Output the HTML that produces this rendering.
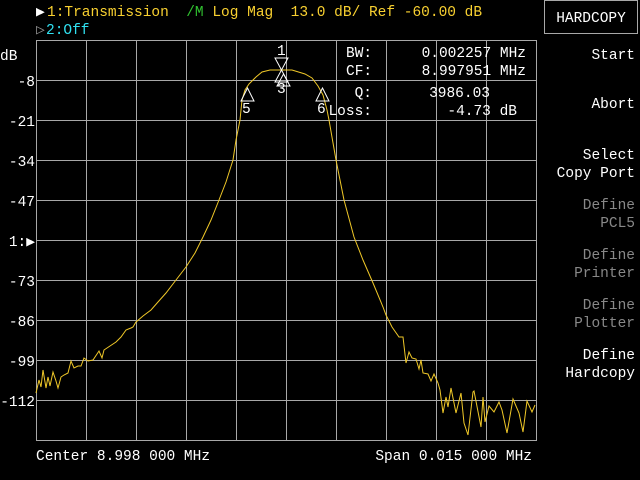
<!DOCTYPE html>
<html><head><meta charset="utf-8"><style>
html,body{margin:0;padding:0;background:#000;width:640px;height:480px;overflow:hidden}
svg{display:block}
text{font-family:"Liberation Mono",monospace;font-size:14.5px}
</style></head><body>
<svg width="640" height="480" viewBox="0 0 640 480" xmlns="http://www.w3.org/2000/svg">
<rect width="640" height="480" fill="#000"/>
<g stroke="#a8a8a8" stroke-width="1" fill="none" shape-rendering="crispEdges">
<rect x="36.5" y="40.5" width="500" height="400"/>
<path d="M86.5 40V440M136.5 40V440M186.5 40V440M236.5 40V440M286.5 40V440M336.5 40V440M386.5 40V440M436.5 40V440M486.5 40V440"/>
<path d="M36 80.5H536M36 120.5H536M36 160.5H536M36 200.5H536M36 240.5H536M36 280.5H536M36 320.5H536M36 360.5H536M36 400.5H536"/>
<rect x="544.5" y="0.5" width="93" height="33"/>
</g>
<polyline fill="none" stroke="#f0c828" stroke-width="1" points="36,393 39,380 41,387 43,370 46,388 48,377 50,386 53,372 56,381 58,388 61,377 64,375 68,373 71,361 74,368 78,366 81,366 84,358 88,361 93,360 99,351 102,358 104,350 110,346 116,342 121,337 126,330 131,328 133,327 136,322 143,316 151,310 158,302 166,293 176,280 186,267 195,253 203,237 211,220 219,200 226,182 233,160 236,140 240,120 242,100 245,90 249,84 256,77 262,72 270,70 292,70 305,74 312,78 318,86 323,95 327,110 329,120 336,160 344,200 354,237 363,260 373,283 383,307 386,315 392,327 399,337 403,337 406,363 409,352 412,358 416,359 419,369 421,360 423,373 428,374 431,381 434,374 438,383 440,390 443,413 446,397 448,407 451,388 456,413 461,393 464,423 468,435 473,392 474,391 481,427 483,397 485,422 489,406 494,412 499,402 502,410 507,433 513,399 519,413 523,432 527,401 532,412 535,405"/>
<g stroke="#fff" fill="none" stroke-width="1">
<path d="M275 58H288L281.5 70Z"/>
<path d="M275 82H288L281.5 70Z"/>
<path d="M277 86H290L283.5 74Z"/>
<path d="M241 101H254L247.5 88Z"/>
<path d="M316 101H329L322.5 88Z"/>
</g>
<g fill="#fff">
<text x="277" y="55">1</text>
<text x="277" y="93">3</text>
<text x="242" y="113">5</text>
<text x="317" y="113">6</text>
</g>
<text x="36" y="16" fill="#fff">▶</text>
<text x="47" y="16" fill="#f8d030" xml:space="preserve">1:Transmission  <tspan fill="#30c030">/M</tspan> Log Mag  13.0 dB/ Ref -60.00 dB</text>
<text x="36" y="34" fill="#909090">▷</text>
<text x="46" y="34" fill="#30e0f0">2:Off</text>
<g fill="#fff">
<text x="0" y="60">dB</text>
<g text-anchor="end">
<text x="35" y="86">-8</text>
<text x="35" y="126">-21</text>
<text x="35" y="166">-34</text>
<text x="35" y="206">-47</text>
<text x="35" y="246">1:▶</text>
<text x="35" y="286">-73</text>
<text x="35" y="326">-86</text>
<text x="35" y="366">-99</text>
<text x="35" y="406">-112</text>
</g>
<text x="346" y="57">BW:</text>
<text x="346" y="75">CF:</text>
<text x="526" y="57" text-anchor="end">0.002257 MHz</text>
<text x="526" y="75" text-anchor="end">8.997951 MHz</text>
<text x="372" y="97" text-anchor="end">Q:</text>
<text x="372" y="115" text-anchor="end">Loss:</text>
<text x="490" y="97" text-anchor="end">3986.03</text>
<text x="517" y="115" text-anchor="end">-4.73 dB</text>
<text x="36" y="460">Center 8.998 000 MHz</text>
<text x="532" y="460" text-anchor="end">Span 0.015 000 MHz</text>
<text x="591" y="22" text-anchor="middle">HARDCOPY</text>
<g text-anchor="end">
<text x="635" y="59">Start</text>
<text x="635" y="108">Abort</text>
<text x="635" y="159">Select</text>
<text x="635" y="177">Copy Port</text>
<text x="635" y="359">Define</text>
<text x="635" y="377">Hardcopy</text>
</g>
</g>
<g fill="#888" text-anchor="end">
<text x="635" y="209">Define</text>
<text x="635" y="227">PCL5</text>
<text x="635" y="259">Define</text>
<text x="635" y="277">Printer</text>
<text x="635" y="309">Define</text>
<text x="635" y="327">Plotter</text>
</g>
</svg>
</body></html>
